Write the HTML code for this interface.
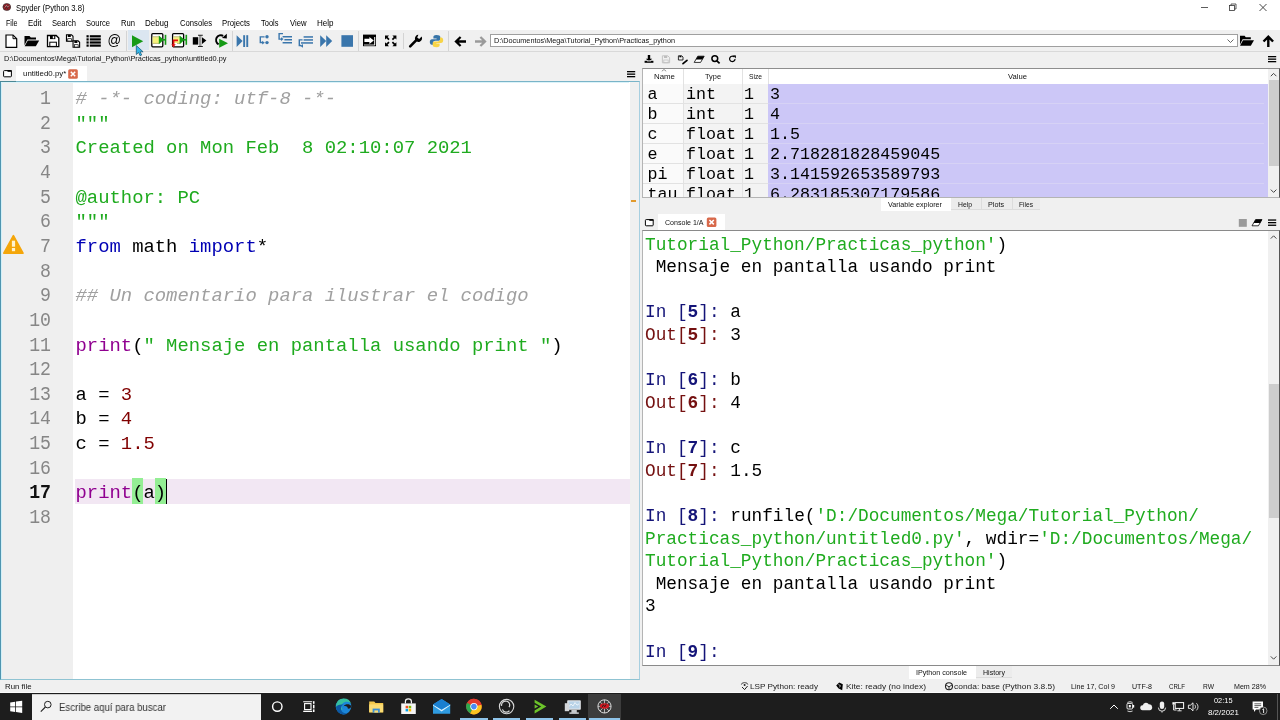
<!DOCTYPE html>
<html><head><meta charset="utf-8">
<style>
*{box-sizing:border-box;margin:0;padding:0}
html,body{width:1280px;height:720px;overflow:hidden;background:#f0f0f0;font-family:"Liberation Sans",sans-serif;font-size:8px;color:#111}
.abs,.b{position:absolute}
.lb{position:absolute;white-space:pre;transform-origin:0 50%;font-family:"Liberation Sans",sans-serif}
.mono{font-family:"Liberation Mono",monospace;white-space:pre}
.ln{position:absolute;left:0;width:51px;transform:scaleY(1.08);transform-origin:0 70%;text-align:right;font-family:"Liberation Mono",monospace;font-size:18.2px;color:#868686;line-height:24.65px;height:24.65px}
.ln.cur{color:#111;font-weight:bold}
.cl{position:absolute;left:75.5px;font-family:"Liberation Mono",monospace;font-size:18.89px;line-height:24.65px;height:24.65px;white-space:pre;color:#000}
.cm{color:#a0a0a0;font-style:italic}
.st{color:#1fab1f}
.kw{color:#0000b4}
.bi{color:#900090}
.nu{color:#800000}
.br{background:#94ee94;padding:4px 0 0}
.co{position:absolute;left:645px;font-family:"Liberation Mono",monospace;font-size:17.75px;line-height:22.61px;height:22.61px;white-space:pre;color:#000}
.ci{color:#141478}
.co b{font-weight:bold}
.cou{color:#741010}
.cs{color:#1fab1f}
.vr{position:absolute;font-family:"Liberation Mono",monospace;font-size:16.7px;line-height:20px;height:20px;white-space:pre;color:#000}
#root{position:absolute;left:0;top:0;width:1280px;height:720px;will-change:transform;}
</style></head><body><div id="root">

<!-- title / menu -->
<div class="b" style="left:0;top:0;width:1280px;height:30px;background:#fff"></div>
<!-- toolbar bottom line + separators -->
<div class="b" style="left:0;top:51px;width:1280px;height:1px;background:#d9d9d9"></div>
<div class="b" style="left:126px;top:31px;width:1px;height:20px;background:#d4d4d4"></div>
<div class="b" style="left:232px;top:31px;width:1px;height:20px;background:#d4d4d4"></div>
<div class="b" style="left:358px;top:31px;width:1px;height:20px;background:#d4d4d4"></div>
<div class="b" style="left:403px;top:33px;width:1px;height:16px;background:#d4d4d4"></div>
<div class="b" style="left:448px;top:31px;width:1px;height:20px;background:#d4d4d4"></div>
<!-- run hover -->
<div class="b" style="left:128px;top:30px;width:21px;height:20px;background:#dbe6f1"></div>
<!-- combo -->
<div class="b" style="left:490px;top:34px;width:748px;height:13px;background:#fff;border:1px solid #9f9f9f"></div>
<!-- editor tab -->
<div class="b" style="left:16px;top:66px;width:71px;height:16px;background:#fff"></div>
<!-- editor frame -->
<div class="b" style="left:0;top:81px;width:640px;height:598.5px;background:#fff;border:1px solid #8fc3d2;border-left-color:#4f95b0;border-top-color:#79b4c8;border-right-color:#a7cfe0"></div>
<div class="b" style="left:0;top:81px;width:16px;height:1px;background:#4a8794"></div>
<div class="b" style="left:1px;top:82px;width:72px;height:596.5px;background:#efefef"></div>
<div class="b" style="left:1px;top:82px;width:1px;height:596.5px;background:#d2f0f8"></div>
<div class="b" style="left:1px;top:82px;width:628px;height:1px;background:#dcf3f9"></div>
<div class="b" style="left:630px;top:82px;width:9px;height:596.5px;background:#f0f0f0"></div>
<div class="b" style="left:631px;top:200px;width:5px;height:2px;background:#e29a2c"></div>

<!-- variable explorer table -->
<div class="b" style="left:642px;top:68px;width:638px;height:130px;background:#fff;border:1px solid #8e8e8e;border-left-color:#b4b4b4;border-bottom-color:#b4b4b4;border-right-color:#555"></div>
<!-- left cells bg -->
<div class="b" style="left:643px;top:84px;width:40px;height:113px;background:#fafafa"></div><div class="b" style="left:683px;top:84px;width:85px;height:113px;background:#f3f3f3"></div>
<div class="b" style="left:768px;top:84px;width:500px;height:113px;background:#ccc7f7"></div>
<!-- grid lines -->
<div class="b" style="left:683px;top:69px;width:1px;height:128px;background:#e2e2e2"></div>
<div class="b" style="left:742px;top:69px;width:1px;height:128px;background:#e2e2e2"></div>
<div class="b" style="left:768px;top:69px;width:1px;height:15px;background:#e2e2e2"></div>
<div class="b" style="left:643px;top:103px;width:125px;height:1px;background:#e2e2e2"></div>
<div class="b" style="left:643px;top:123px;width:125px;height:1px;background:#e2e2e2"></div>
<div class="b" style="left:643px;top:143px;width:125px;height:1px;background:#e2e2e2"></div>
<div class="b" style="left:643px;top:163px;width:125px;height:1px;background:#e2e2e2"></div>
<div class="b" style="left:643px;top:183px;width:125px;height:1px;background:#e2e2e2"></div>
<div class="b" style="left:768px;top:103px;width:496px;height:1px;background:#d6d2f5"></div>
<div class="b" style="left:768px;top:123px;width:496px;height:1px;background:#d6d2f5"></div>
<div class="b" style="left:768px;top:143px;width:496px;height:1px;background:#d6d2f5"></div>
<div class="b" style="left:768px;top:163px;width:496px;height:1px;background:#d6d2f5"></div>
<div class="b" style="left:768px;top:183px;width:496px;height:1px;background:#d6d2f5"></div>
<!-- var scrollbar -->
<div class="b" style="left:1268px;top:69px;width:11px;height:128px;background:#f0f0f0"></div>
<div class="b" style="left:1269px;top:80px;width:10px;height:86px;background:#cdcdcd"></div>
<!-- right tabs (var explorer) -->
<div class="b" style="left:951px;top:198px;width:89px;height:12px;background:#ececec;border-bottom:1px solid #dcdcdc"></div>
<div class="b" style="left:981px;top:198px;width:1px;height:11px;background:#dcdcdc"></div>
<div class="b" style="left:1012px;top:198px;width:1px;height:11px;background:#dcdcdc"></div>
<div class="b" style="left:881px;top:198px;width:70px;height:13px;background:#fff"></div>
<!-- console tab -->
<div class="b" style="left:658px;top:214px;width:67px;height:17px;background:#fff"></div>
<!-- console frame -->
<div class="b" style="left:642px;top:230px;width:638px;height:436px;background:#fff;border:1px solid #8a8a8a;border-left-color:#b4b4b4;border-right-color:#555"></div>
<div class="b" style="left:1268px;top:231px;width:11px;height:434px;background:#f0f0f0"></div>
<div class="b" style="left:1269px;top:384px;width:10px;height:134px;background:#cdcdcd"></div>
<!-- console bottom tabs -->
<div class="b" style="left:976px;top:666px;width:36px;height:12px;background:#ececec;border-bottom:1px solid #dcdcdc"></div>
<div class="b" style="left:909px;top:666px;width:67px;height:13px;background:#fff"></div>
<!-- taskbar -->
<div class="b" style="left:0;top:692px;width:1280px;height:1px;background:#fafafa"></div>
<div class="b" style="left:0;top:693px;width:1280px;height:27px;background:#1d1d1d"></div>
<div class="b" style="left:32px;top:694px;width:229px;height:26px;background:#f2f2f2;border-top:1px solid #d0d0d0"></div>
<div class="b" style="left:588px;top:694px;width:33px;height:26px;background:#3c3c3c"></div>
<div class="b" style="left:460px;top:718px;width:28px;height:2px;background:#8fc4ea"></div>
<div class="b" style="left:493px;top:718px;width:27px;height:2px;background:#8fc4ea"></div>
<div class="b" style="left:526px;top:718px;width:27px;height:2px;background:#8fc4ea"></div>
<div class="b" style="left:559px;top:718px;width:27px;height:2px;background:#8fc4ea"></div>
<div class="b" style="left:589px;top:718px;width:31px;height:2px;background:#8fc4ea"></div>
<div class="b" style="left:1277px;top:694px;width:1px;height:26px;background:#555"></div>

<div class="b" style="left:75px;top:479px;width:555px;height:25px;background:#f2e7f3"></div>
<div class="ln" style="top:87.00px">1</div>
<div class="cl" style="top:87.00px"><span class="cm"># -*- coding: utf-8 -*-</span></div>
<div class="ln" style="top:111.65px">2</div>
<div class="cl" style="top:111.65px"><span class="st">"""</span></div>
<div class="ln" style="top:136.30px">3</div>
<div class="cl" style="top:136.30px"><span class="st">Created on Mon Feb  8 02:10:07 2021</span></div>
<div class="ln" style="top:160.95px">4</div>
<div class="ln" style="top:185.60px">5</div>
<div class="cl" style="top:185.60px"><span class="st">@author: PC</span></div>
<div class="ln" style="top:210.25px">6</div>
<div class="cl" style="top:210.25px"><span class="st">"""</span></div>
<div class="ln" style="top:234.90px">7</div>
<div class="cl" style="top:234.90px"><span class="kw">from</span> math <span class="kw">import</span>*</div>
<div class="ln" style="top:259.55px">8</div>
<div class="ln" style="top:284.20px">9</div>
<div class="cl" style="top:284.20px"><span class="cm">## Un comentario para ilustrar el codigo</span></div>
<div class="ln" style="top:308.85px">10</div>
<div class="ln" style="top:333.50px">11</div>
<div class="cl" style="top:333.50px"><span class="bi">print</span>(<span class="st">" Mensaje en pantalla usando print "</span>)</div>
<div class="ln" style="top:358.15px">12</div>
<div class="ln" style="top:382.80px">13</div>
<div class="cl" style="top:382.80px">a = <span class="nu">3</span></div>
<div class="ln" style="top:407.45px">14</div>
<div class="cl" style="top:407.45px">b = <span class="nu">4</span></div>
<div class="ln" style="top:432.10px">15</div>
<div class="cl" style="top:432.10px">c = <span class="nu">1.5</span></div>
<div class="ln" style="top:456.75px">16</div>
<div class="ln cur" style="top:481.40px">17</div>
<div class="cl" style="top:481.40px"><span class="bi">print</span><span class="br">(</span>a<span class="br">)</span></div>
<div class="ln" style="top:506.05px">18</div>
<div class="b" style="left:166px;top:479px;width:1.2px;height:25px;background:#000"></div>
<div class="b" style="left:643px;top:84px;width:625px;height:113px;overflow:hidden">
<span class="vr" style="left:4.5px;top:1.2px">a</span><span class="vr" style="left:43px;top:1.2px">int</span><span class="vr" style="left:101px;top:1.2px">1</span><span class="vr" style="left:127px;top:1.2px">3</span>
<span class="vr" style="left:4.5px;top:21.2px">b</span><span class="vr" style="left:43px;top:21.2px">int</span><span class="vr" style="left:101px;top:21.2px">1</span><span class="vr" style="left:127px;top:21.2px">4</span>
<span class="vr" style="left:4.5px;top:41.2px">c</span><span class="vr" style="left:43px;top:41.2px">float</span><span class="vr" style="left:101px;top:41.2px">1</span><span class="vr" style="left:127px;top:41.2px">1.5</span>
<span class="vr" style="left:4.5px;top:61.2px">e</span><span class="vr" style="left:43px;top:61.2px">float</span><span class="vr" style="left:101px;top:61.2px">1</span><span class="vr" style="left:127px;top:61.2px">2.718281828459045</span>
<span class="vr" style="left:4.5px;top:81.2px">pi</span><span class="vr" style="left:43px;top:81.2px">float</span><span class="vr" style="left:101px;top:81.2px">1</span><span class="vr" style="left:127px;top:81.2px">3.141592653589793</span>
<span class="vr" style="left:4.5px;top:101.2px">tau</span><span class="vr" style="left:43px;top:101.2px">float</span><span class="vr" style="left:101px;top:101.2px">1</span><span class="vr" style="left:127px;top:101.2px">6.283185307179586</span>
</div>
<div class="co" style="top:233.65px"><span class="cs">Tutorial_Python/Practicas_python'</span>)</div>
<div class="co" style="top:256.25px"> Mensaje en pantalla usando print</div>
<div class="co" style="top:301.48px"><span class="ci">In [<b>5</b>]:</span> a</div>
<div class="co" style="top:324.09px"><span class="cou">Out[<b>5</b>]:</span> 3</div>
<div class="co" style="top:369.31px"><span class="ci">In [<b>6</b>]:</span> b</div>
<div class="co" style="top:391.91px"><span class="cou">Out[<b>6</b>]:</span> 4</div>
<div class="co" style="top:437.13px"><span class="ci">In [<b>7</b>]:</span> c</div>
<div class="co" style="top:459.75px"><span class="cou">Out[<b>7</b>]:</span> 1.5</div>
<div class="co" style="top:504.97px"><span class="ci">In [<b>8</b>]:</span> runfile(<span class="cs">'D:/Documentos/Mega/Tutorial_Python/</span></div>
<div class="co" style="top:527.58px"><span class="cs">Practicas_python/untitled0.py'</span>, wdir=<span class="cs">'D:/Documentos/Mega/</span></div>
<div class="co" style="top:550.18px"><span class="cs">Tutorial_Python/Practicas_python'</span>)</div>
<div class="co" style="top:572.79px"> Mensaje en pantalla usando print</div>
<div class="co" style="top:595.40px">3</div>
<div class="co" style="top:640.62px"><span class="ci">In [<b>9</b>]:</span></div>
<span class="lb" style="left:15.50px;top:2.60px;font-size:8.40px;line-height:10px;transform:scaleX(0.9197);color:#000">Spyder (Python 3.8)</span>
<span class="lb" style="left:5.50px;top:19.00px;font-size:8.20px;line-height:10px;transform:scaleX(0.8710);color:#000">File</span>
<span class="lb" style="left:28.00px;top:19.00px;font-size:8.20px;line-height:10px;transform:scaleX(0.9568);color:#000">Edit</span>
<span class="lb" style="left:51.50px;top:19.00px;font-size:8.20px;line-height:10px;transform:scaleX(0.9247);color:#000">Search</span>
<span class="lb" style="left:86.00px;top:19.00px;font-size:8.20px;line-height:10px;transform:scaleX(0.9247);color:#000">Source</span>
<span class="lb" style="left:120.50px;top:19.00px;font-size:8.20px;line-height:10px;transform:scaleX(0.9314);color:#000">Run</span>
<span class="lb" style="left:145.00px;top:19.00px;font-size:8.20px;line-height:10px;transform:scaleX(0.9735);color:#000">Debug</span>
<span class="lb" style="left:179.50px;top:19.00px;font-size:8.20px;line-height:10px;transform:scaleX(0.9373);color:#000">Consoles</span>
<span class="lb" style="left:222.00px;top:19.00px;font-size:8.20px;line-height:10px;transform:scaleX(0.9466);color:#000">Projects</span>
<span class="lb" style="left:261.00px;top:19.00px;font-size:8.20px;line-height:10px;transform:scaleX(0.9150);color:#000">Tools</span>
<span class="lb" style="left:289.50px;top:19.00px;font-size:8.20px;line-height:10px;transform:scaleX(0.9370);color:#000">View</span>
<span class="lb" style="left:316.50px;top:19.00px;font-size:8.20px;line-height:10px;transform:scaleX(0.9796);color:#000">Help</span>
<span class="lb" style="left:3.50px;top:54.10px;font-size:7.40px;line-height:9px;transform:scaleX(0.9950);color:#111">D:\Documentos\Mega\Tutorial_Python\Practicas_python\untitled0.py</span>
<span class="lb" style="left:22.70px;top:68.80px;font-size:7.60px;line-height:10px;transform:scaleX(1.0360);color:#111">untitled0.py*</span>
<span class="lb" style="left:494.00px;top:36.40px;font-size:7.40px;line-height:9px;transform:scaleX(0.9850);color:#111">D:\Documentos\Mega\Tutorial_Python\Practicas_python</span>
<span class="lb" style="left:654.00px;top:71.60px;font-size:7.60px;line-height:10px;transform:scaleX(1.0362);color:#111">Name</span>
<span class="lb" style="left:705.00px;top:71.60px;font-size:7.60px;line-height:10px;transform:scaleX(0.9715);color:#111">Type</span>
<span class="lb" style="left:749.00px;top:71.60px;font-size:7.60px;line-height:10px;transform:scaleX(0.8795);color:#111">Size</span>
<span class="lb" style="left:1008.00px;top:71.60px;font-size:7.60px;line-height:10px;transform:scaleX(1.0075);color:#111">Value</span>
<span class="lb" style="left:888.00px;top:199.60px;font-size:7.60px;line-height:10px;transform:scaleX(0.9500);color:#111">Variable explorer</span>
<span class="lb" style="left:958.00px;top:199.60px;font-size:7.60px;line-height:10px;transform:scaleX(0.8960);color:#111">Help</span>
<span class="lb" style="left:988.00px;top:199.60px;font-size:7.60px;line-height:10px;transform:scaleX(0.9473);color:#111">Plots</span>
<span class="lb" style="left:1019.00px;top:199.60px;font-size:7.60px;line-height:10px;transform:scaleX(0.8724);color:#111">Files</span>
<span class="lb" style="left:665.00px;top:217.80px;font-size:7.60px;line-height:10px;transform:scaleX(0.9305);color:#111">Console 1/A</span>
<span class="lb" style="left:916.00px;top:667.70px;font-size:7.60px;line-height:10px;transform:scaleX(0.9436);color:#111">IPython console</span>
<span class="lb" style="left:983.00px;top:667.70px;font-size:7.60px;line-height:10px;transform:scaleX(0.9306);color:#111">History</span>
<span class="lb" style="left:4.50px;top:681.60px;font-size:7.60px;line-height:10px;transform:scaleX(1.0291);color:#111">Run file</span>
<span class="lb" style="left:750.00px;top:681.80px;font-size:8.00px;line-height:10px;transform:scaleX(1.0216);color:#222">LSP Python: ready</span>
<span class="lb" style="left:846.00px;top:681.80px;font-size:8.00px;line-height:10px;transform:scaleX(1.0520);color:#222">Kite: ready (no index)</span>
<span class="lb" style="left:954.00px;top:681.80px;font-size:8.00px;line-height:10px;transform:scaleX(1.0514);color:#222">conda: base (Python 3.8.5)</span>
<span class="lb" style="left:1071.00px;top:681.60px;font-size:7.60px;line-height:10px;transform:scaleX(0.9387);color:#111">Line 17, Col 9</span>
<span class="lb" style="left:1132.00px;top:681.60px;font-size:7.60px;line-height:10px;transform:scaleX(0.9296);color:#111">UTF-8</span>
<span class="lb" style="left:1169.00px;top:681.60px;font-size:7.60px;line-height:10px;transform:scaleX(0.8063);color:#111">CRLF</span>
<span class="lb" style="left:1203.00px;top:681.60px;font-size:7.60px;line-height:10px;transform:scaleX(0.8789);color:#111">RW</span>
<span class="lb" style="left:1234.00px;top:681.60px;font-size:7.60px;line-height:10px;transform:scaleX(0.9360);color:#111">Mem 28%</span>
<span class="lb" style="left:59.00px;top:700.50px;font-size:10.20px;line-height:13px;transform:scaleX(0.9447);color:#333">Escribe aquí para buscar</span>
<span class="lb" style="left:1214.00px;top:695.80px;font-size:7.60px;line-height:10px;transform:scaleX(0.9729);color:#fff">02:15</span>
<span class="lb" style="left:1207.60px;top:707.50px;font-size:7.60px;line-height:10px;transform:scaleX(1.0452);color:#fff">8/2/2021</span>
<svg class="b" style="left:0;top:0" width="1280" height="720" viewBox="0 0 1280 720">
<!-- ===== title bar ===== -->
<g id="ti">
<ellipse cx="6.800" cy="7" rx="3.900" ry="3.500" fill="#9c1a24"/><ellipse cx="6.800" cy="7" rx="3.900" ry="3.500" fill="none" stroke="#3a3a3a" stroke-width="0.700"/>
<path d="M3.200 6.600l7.200 0.600M4.600 9.400l4.600-5M5.600 4.200l2.600 6" stroke="#2c2c2c" stroke-width="0.600"/><path d="M4.800 7.400l1.600-2 1.200 1.800 1.400-1.600" stroke="#e8b0b0" stroke-width="0.600" fill="none"/>
<path d="M1201 7.5h7" stroke="#333" stroke-width="0.8"/>
<rect x="1229.5" y="5.5" width="5" height="5" fill="none" stroke="#333" stroke-width="0.8"/><path d="M1231 5.5v-1.5h5v5h-1.5" fill="none" stroke="#333" stroke-width="0.8"/>
<path d="M1259.5 4l7 7m0-7l-7 7" stroke="#333" stroke-width="0.9"/>
</g>
<!-- ===== main toolbar ===== -->
<g id="tb">
<!-- new file -->
<path d="M6 35h7l3.7 3.7V47.3H6z" fill="#fff" stroke="#000" stroke-width="1.2"/><path d="M13 35v3.7h3.7" fill="none" stroke="#000" stroke-width="1"/>
<!-- open folder -->
<path d="M24.5 36h5l1.3 1.6h5.2v2h-8.6l-2.9 5.6z" fill="#000"/><path d="M27.8 40.5h11.4l-3.4 5.7H24.6z" fill="#000"/>
<!-- save -->
<path d="M47.5 35.5h8.7l2.6 2.6v8.6H47.5z" fill="#fff" stroke="#000" stroke-width="1.3"/><rect x="50" y="35.5" width="5.3" height="3.6" fill="#000"/><rect x="52.8" y="36.2" width="1.4" height="2.2" fill="#fff"/><rect x="49.8" y="42.2" width="6.6" height="4.2" fill="#fff" stroke="#000" stroke-width="1"/>
<!-- save all -->
<g transform="translate(66 34.3) scale(0.58)"><path d="M0.8 0.8h8.7l2.6 2.6v8.6H0.8z" fill="#fff" stroke="#000" stroke-width="1.9"/><rect x="3" y="0.8" width="5.3" height="3.8" fill="#000"/><rect x="3" y="7.6" width="6.6" height="4" fill="#fff" stroke="#000" stroke-width="1.2"/></g>
<g transform="translate(72.6 40.3) scale(0.58)"><path d="M0.8 0.8h8.7l2.6 2.6v8.6H0.8z" fill="#fff" stroke="#000" stroke-width="1.9"/><rect x="3" y="0.8" width="5.3" height="3.8" fill="#000"/><rect x="3" y="7.6" width="6.6" height="4" fill="#fff" stroke="#000" stroke-width="1.2"/></g>
<!-- list -->
<g fill="#000"><rect x="86.5" y="35.2" width="2.2" height="2.2"/><rect x="89.8" y="35.2" width="11" height="2.2"/><rect x="86.5" y="38.3" width="2.2" height="2.2"/><rect x="89.8" y="38.3" width="11" height="2.2"/><rect x="86.5" y="41.4" width="2.2" height="2.2"/><rect x="89.8" y="41.4" width="11" height="2.2"/><rect x="86.5" y="44.5" width="2.2" height="2.2"/><rect x="89.8" y="44.5" width="11" height="2.2"/></g>
<!-- @ -->
<text x="107.4" y="45.2" font-family="Liberation Sans" font-size="14.2" fill="#000" textLength="13.6" lengthAdjust="spacingAndGlyphs">@</text>
<!-- run -->
<path d="M132 35.3l11.2 5.9L132 47.2z" fill="#169a16"/>
<!-- cursor -->
<path d="M136.3 45.5l0 9 2.2-2 1.6 3.3 1.6-0.8-1.6-3.2 3 0z" fill="#35b6e8" stroke="#12506e" stroke-width="0.7"/>
<!-- run cell -->
<rect x="151.800" y="33.600" width="11" height="13.200" rx="1" fill="#fff" stroke="#000" stroke-width="1.300"/><rect x="152.600" y="37.200" width="8" height="5.800" fill="#f7f27c"/><path d="M152.600 36.800h7M152.600 43.400h7" stroke="#b9b25a" stroke-width="0.900"/>
<path d="M158.800 35.400l5 4.400-5 4.400z" fill="#169a16"/><rect x="164.700" y="34.800" width="1.600" height="10" fill="#169a16"/><rect x="163" y="39" width="2.400" height="1.600" fill="#169a16"/>
<!-- run cell advance -->
<rect x="172.600" y="33.600" width="11" height="13.200" rx="1" fill="#fff" stroke="#000" stroke-width="1.300"/><rect x="173.400" y="37.200" width="8" height="5.800" fill="#f7f27c"/><path d="M173.400 36.800h7M177 43.400h3.400" stroke="#b9b25a" stroke-width="0.900"/>
<path d="M179.600 35.400l5 4.400-5 4.400z" fill="#169a16"/><rect x="185.500" y="34.800" width="1.600" height="10" fill="#169a16"/><rect x="183.800" y="39" width="2.400" height="1.600" fill="#169a16"/>
<path d="M178 40.300h-4.500v4.800" fill="none" stroke="#e01010" stroke-width="1.800"/><path d="M171.400 44.200l2.100 3.400 2.100-3.400z" fill="#e01010"/>
<!-- run selection -->
<rect x="192.800" y="37.200" width="5.400" height="7.400" fill="#000"/><rect x="199" y="35.200" width="2.500" height="11.400" fill="#9a9a9a"/><path d="M198 35.300h4.800M198 46.500h4.800" stroke="#222" stroke-width="1.100"/><path d="M202 37.200l4.400 3.400-4.400 3.400z" fill="#000"/>
<!-- rerun -->
<path d="M223.200 35.800a4.500 4.500 0 1 0-4.600 8.600" fill="none" stroke="#000" stroke-width="1.900"/><path d="M226.800 33.800v4.700l-4.900-0.500z" fill="#000"/>
<path d="M219.200 38.700l8.800 4.600-8.800 4.500z" fill="#169a16"/>
<!-- debug -->
<g fill="#3a76ac">
<path d="M236.6 35.2l6 5.9-6 5.9z"/><rect x="243.2" y="35.2" width="1.9" height="11.8"/><rect x="246.3" y="35.2" width="1.9" height="11.8"/>
<!-- step -->
<circle cx="267" cy="36.8" r="1.7"/><circle cx="267" cy="42.6" r="1.7"/>
<path d="M264.6 36.2h-5v7h3.4v-1.4h-2v-4.2h3.6z"/><path d="M262.2 40.8l2.6 1.9-2.6 1.9z"/>
<!-- step into -->
<path d="M283 33h-4.6v6.8h3v-1.3h-1.6v-4.2h3.2z"/><path d="M281 37.2l2.6 1.9-2.6 1.9z"/>
<rect x="282.6" y="36" width="9.4" height="1.5"/><rect x="284.4" y="39" width="7.6" height="1.5"/><rect x="282.6" y="42" width="9.4" height="1.5"/>
<!-- step return -->
<rect x="303.6" y="36.2" width="9.4" height="1.5"/><rect x="303.6" y="39.2" width="9.4" height="1.5"/><rect x="301" y="42.2" width="12" height="1.5"/>
<path d="M302.6 39.2h-4v7h2.6v-1.4h-1.2v-4.2h2.6z"/><path d="M303 44l-2.6 1.9 2.6 1.9z"/>
<!-- continue -->
<path d="M320.2 35.2l6 5.9-6 5.9z"/><path d="M326.2 35.2l6 5.9-6 5.9z"/>
<!-- stop -->
<rect x="341.4" y="35.2" width="11.6" height="11.6"/>
</g>
<!-- maximize pane -->
<rect x="363" y="34.6" width="13" height="11.6" fill="#000"/><path d="M364.4 38.8h5v-1.9l4.4 3.5-4.4 3.5v-1.9h-5z" fill="#fff"/><rect x="374.2" y="37" width="1" height="8" fill="#fff"/><rect x="364" y="44.6" width="11" height="0.8" fill="#fff"/>
<!-- fullscreen -->
<g fill="#000"><path d="M385 35.6h4l-1.4 1.4 2 2-1.2 1.2-2-2-1.4 1.4z"/><path d="M396.4 35.6v4l-1.4-1.4-2 2-1.2-1.2 2-2-1.4-1.4z"/><path d="M385 46.2v-4l1.4 1.4 2-2 1.2 1.2-2 2 1.4 1.4z"/><path d="M396.4 46.2h-4l1.4-1.4-2-2 1.2-1.2 2 2 1.4-1.4z"/></g>
<!-- wrench -->
<path d="M410.2 46.4l6.6-6.8" stroke="#000" stroke-width="2.6" stroke-linecap="round"/><path d="M421.6 36.6a3.6 3.6 0 1 1-3.2-1.8l-1.2 2.6 2 1.6z" fill="#000"/>
<!-- python -->
<path d="M436.4 35c-2.6 0-3 1.1-3 2v1.6h3.2v.6h-4.6c-1.4 0-2.2 1.2-2.2 2.8s.8 2.8 2 2.800h1.200v-1.800c0-1.300 1.100-2.200 2.300-2.200h3.200c1 0 1.800-.8 1.800-1.800v-2c0-1.200-1.200-2-3.900-2z" fill="#3774a8"/>
<path d="M436.600 47.200c2.600 0 3-1.100 3-2v-1.600h-3.200v-.6h4.600c1.400 0 2.200-1.200 2.200-2.800s-.8-2.800-2-2.800h-1.200v1.800c0 1.300-1.100 2.200-2.300 2.200h-3.200c-1 0-1.800.8-1.800 1.800v2c0 1.200 1.200 2 3.900 2z" fill="#f7d447"/>
<!-- back / forward -->
<path d="M466 41.500h-9.500M460.600 37l-4.600 4.500 4.600 4.500" fill="none" stroke="#000" stroke-width="2.300" stroke-linejoin="miter"/>
<path d="M475 41.500h9.500M480.400 37l4.600 4.500-4.600 4.500" fill="none" stroke="#9a9a9a" stroke-width="2.300"/>
<!-- combo chevron -->
<path d="M1227.500 39.500l3 3 3-3" fill="none" stroke="#555" stroke-width="0.9"/>
<!-- folder right -->
<path d="M1240 35.800h4.600l1.200 1.500h5v2h-8.200l-2.600 5.200z" fill="#000"/><path d="M1243 40.300h11l-3.200 5.500H1240z" fill="#000"/>
<!-- up arrow -->
<path d="M1268.300 47v-9.500M1263.500 41.500l4.800-4.700 4.800 4.700" fill="none" stroke="#000" stroke-width="2.400"/>
</g>

<!-- ===== var explorer toolbar ===== -->
<g id="ve">
<path d="M647.800 55h2.400v3.800h2l-3.200 3-3.200-3h2z" fill="#000"/><rect x="644.600" y="60.800" width="8.800" height="2" fill="#000"/><rect x="647" y="60.400" width="4" height="1" fill="#f0f0f0"/>
<path d="M662.400 55.800h5.400l1.800 1.800v5.200h-7.200z" fill="none" stroke="#bdbdbd" stroke-width="0.900"/><rect x="664" y="55.800" width="3.200" height="2.200" fill="#bdbdbd"/><rect x="663.800" y="60" width="4.400" height="2.800" fill="none" stroke="#bdbdbd" stroke-width="0.700"/>
<path d="M678.400 55.800h3.400l1.200 1.200v3h-4.600z" fill="none" stroke="#000" stroke-width="0.800"/><rect x="679.400" y="55.800" width="2" height="1.500" fill="#000"/>
<path d="M687 60.300l-4 3.400" stroke="#000" stroke-width="1.700" stroke-linecap="round"/>
<path d="M697.800 56.200h6.400l-3.600 6.200h-6.400z" fill="#fff" stroke="#000" stroke-width="0.800"/><path d="M697.800 56.200h6.400l-1.900 3.300h-6.400z" fill="#000"/>
<circle cx="714.800" cy="58.600" r="2.900" fill="none" stroke="#000" stroke-width="1.500"/><path d="M716.900 60.800l2.700 2.600" stroke="#000" stroke-width="1.700"/>
<path d="M735 58.900a2.700 2.700 0 1 1-1-2.100" fill="none" stroke="#000" stroke-width="1.200"/><path d="M733 55.200l3 0.200-0.300 3z" fill="#000"/>
<g fill="#000"><rect x="1268" y="56" width="8.200" height="1.300"/><rect x="1268" y="58.500" width="8.200" height="1.300"/><rect x="1268" y="61" width="8.200" height="1.300"/></g>
</g>
<!-- editor tab bar icons -->
<g id="et">
<rect x="3.600" y="70.600" width="7.800" height="6.200" rx="0.800" fill="#fff" stroke="#000" stroke-width="1"/><rect x="7.500" y="70.200" width="4.300" height="1.600" fill="#000"/>
<rect x="68.200" y="69.200" width="9.600" height="9.600" rx="1.500" fill="#d8694b"/><path d="M70.800 71.800l4.400 4.400m0-4.400l-4.400 4.400" stroke="#fff" stroke-width="1.500"/>
<g fill="#000"><rect x="627" y="71" width="8.200" height="1.300"/><rect x="627" y="73.500" width="8.200" height="1.300"/><rect x="627" y="76" width="8.200" height="1.300"/></g>
</g>
<!-- console tab bar icons -->
<g id="ct">
<rect x="645.400" y="219.600" width="7.800" height="6.200" rx="0.800" fill="#fff" stroke="#000" stroke-width="1"/><rect x="649.300" y="219.200" width="4.300" height="1.600" fill="#000"/>
<rect x="706.800" y="217.400" width="9.600" height="9.600" rx="1.500" fill="#d8694b"/><path d="M709.400 220l4.400 4.400m0-4.400l-4.400 4.400" stroke="#fff" stroke-width="1.500"/>
<rect x="1238.800" y="219" width="8" height="7.800" fill="#9a9a9a"/>
<path d="M1255.600 219.600h6.400l-3.600 6.200h-6.400z" fill="#fff" stroke="#000" stroke-width="0.800"/><path d="M1255.600 219.600h6.400l-1.900 3.300h-6.400z" fill="#000"/>
<g fill="#000"><rect x="1268" y="219.400" width="8.200" height="1.300"/><rect x="1268" y="222" width="8.200" height="1.300"/><rect x="1268" y="224.600" width="8.200" height="1.300"/></g>
</g>
<!-- scrollbar arrows -->
<g fill="none" stroke="#444" stroke-width="1">
<path d="M1270.800 76.200l2.800-2.800 2.800 2.800"/><path d="M1270.800 189.600l2.800 2.800 2.800-2.800"/>
<path d="M1270.800 238.600l2.800-2.800 2.800 2.800"/><path d="M1270.800 656.400l2.800 2.800 2.800-2.800"/>
</g>
<!-- header sort indicator -->
<path d="M661.800 71.200l2.200-1.700 2.200 1.700" fill="none" stroke="#666" stroke-width="0.700"/>
<!-- warning triangle -->
<path d="M13.400 235.600l9.600 17.600H3.800z" fill="#f4a60a" stroke="#f4a60a" stroke-width="1.600" stroke-linejoin="round"/><rect x="11.900" y="240.700" width="3.200" height="6" fill="#fff3cf"/><rect x="11.900" y="248" width="3.200" height="3.200" fill="#fff3cf"/>
<!-- status icons -->
<g id="sb">
<circle cx="744.600" cy="685" r="1" fill="#222"/><path d="M741.400 684.600a3.200 2 0 0 1 6.400 0" fill="none" stroke="#222" stroke-width="0.800"/><path d="M742 687l2.600 2.600 3-3.600" fill="none" stroke="#222" stroke-width="1"/>
<path d="M839.200 682.600l3.600 1.600-0.600 6-3.600-1.800-2.400-3z" fill="#000"/><path d="M838.400 684.600l2 1-0.800 1.800" stroke="#f0f0f0" stroke-width="0.700" fill="none"/>
<circle cx="949" cy="686.300" r="3.500" fill="none" stroke="#222" stroke-width="1.100"/><path d="M946 685l3 1.800 3-1.800M949 686.800v3" stroke="#222" stroke-width="0.900" fill="none"/>
</g>

<!-- ===== taskbar ===== -->
<g id="tk">
<!-- windows logo -->
<g fill="#fff"><path d="M10.200 702.400l5-0.700v4.700h-5z"/><path d="M16 701.600l6.200-0.900v5.700H16z"/><path d="M10.200 707.200h5v4.700l-5-0.700z"/><path d="M16 707.200h6.200v5.700L16 712z"/></g>
<!-- search icon -->
<circle cx="47.800" cy="704.600" r="3.300" fill="none" stroke="#222" stroke-width="1"/><path d="M45.400 707l-4.600 4.600" stroke="#222" stroke-width="1.100"/>
<!-- cortana -->
<circle cx="277.300" cy="706.600" r="4.700" fill="none" stroke="#fff" stroke-width="1.400"/>
<!-- task view -->
<g fill="none" stroke="#fff" stroke-width="1.100"><rect x="304.600" y="703.600" width="6.400" height="6"/><path d="M303.200 701.800h9M303.200 711.400h9"/></g><g fill="#fff"><rect x="313" y="701.200" width="1.500" height="2.600"/><rect x="313" y="704.800" width="1.500" height="3.600"/><rect x="313" y="709.400" width="1.500" height="2.600"/></g>
<!-- edge -->
<circle cx="343.500" cy="706.600" r="7.800" fill="#1b86d8"/><path d="M336.200 704.500a7.800 7.800 0 0 1 15-0.500c-1.500-2.400-6-3.300-8.600-0.400c-1.800 2-1.400 4.600 0 6.200c-4 0.200-7.200-2.300-6.400-5.300z" fill="#36c0a0"/><path d="M336 707a7.800 7.800 0 0 0 11.600 6.400c-3.600 0.600-6.800-1.600-6.600-5.300c0.100-1.800 1.200-3 2.600-3.500c-3.200-0.600-6.800 0.200-7.600 2.400z" fill="#0c59a4"/><path d="M343.600 706.200c1.800-0.800 4.400 0 4.200 2.400c1.800 0.300 3.400-0.800 3.500-2.600c-1.600-2.200-5.800-2.600-7.700 0.200z" fill="#1d1d1d"/>
<!-- explorer -->
<path d="M369.200 701.400h5l1.300 1.500h7.700v9.500h-14z" fill="#f4c94c"/><path d="M369.200 704.400h14v7.800h-14z" fill="#fbdc74"/><path d="M372.600 708.600h7.200v4h-7.200z" fill="#3b8fd6"/><rect x="374.400" y="710.400" width="3.600" height="2.200" fill="#fbdc74"/>
<!-- store -->
<path d="M401.200 703.400h14.600v10.600h-14.600z" fill="#f4f4f4"/><path d="M405.400 703.400v-2a3 2.600 0 0 1 6 0v2" fill="none" stroke="#f4f4f4" stroke-width="1.200"/><rect x="405.600" y="705.800" width="2.500" height="2.500" fill="#f25022"/><rect x="408.700" y="705.800" width="2.500" height="2.500" fill="#7fba00"/><rect x="405.600" y="708.900" width="2.500" height="2.500" fill="#00a4ef"/><rect x="408.700" y="708.900" width="2.500" height="2.500" fill="#ffb900"/>
<!-- mail -->
<path d="M433 704.400l8.600-5.400 8.600 5.400v9.400h-17.200z" fill="#2f9be0"/><path d="M433 704.600l8.600 5.200 8.600-5.200v0.800l-8.600 6-8.600-6z" fill="#d7eefc"/><path d="M433 704.400l8.600-5.400 8.600 5.400-8.600 5.200z" fill="#1a7fd0"/>
<!-- chrome -->
<circle cx="473.900" cy="706.600" r="7.800" fill="#e33b2e"/><path d="M473.900 706.600L467.100 702.800A7.800 7.800 0 0 0 470.200 713.500z" fill="#2da94f"/><path d="M473.900 706.600L470.200 713.500A7.800 7.800 0 0 0 481.500 704.800z" fill="#fcc31e"/><path d="M467.200 702.700a7.800 7.800 0 0 1 14.300 2.100h-7.600z" fill="#e33b2e"/><circle cx="473.900" cy="706.600" r="3.600" fill="#fff"/><circle cx="473.900" cy="706.600" r="2.800" fill="#4a8af4"/>
<!-- obs -->
<circle cx="506.600" cy="706.600" r="7.200" fill="#1d1d1d" stroke="#d8d8d8" stroke-width="1.100"/><path d="M506.600 706.600m-1-5.600a4 4 0 0 1 3.400 6.200M509.400 710.600a4 4 0 0 1-7-1.200M501.600 705.800a4 4 0 0 1 4.600-4.600" fill="none" stroke="#d8d8d8" stroke-width="1.200"/>
<!-- green arrow -->
<path d="M534.600 699.800l11.800 6.800-11.800 6.800v-3l6.600-3.800-6.600-3.800z" fill="#6cc32a"/><path d="M534.600 704.600l3.600 2-3.600 2z" fill="#6cc32a"/>
<!-- monitor -->
<rect x="567.200" y="700.200" width="13.600" height="9.600" rx="0.800" fill="#e6e9ec"/><rect x="568.400" y="701.400" width="11.200" height="7.200" fill="#b9d3e8"/><path d="M569 706.600l2-2.600 2 2 2-3.400 2 2.600 2-1.400" stroke="#fff" stroke-width="0.700" fill="none"/><rect x="564.800" y="703.200" width="4.400" height="8" fill="#d4d7da"/><rect x="571.400" y="710" width="5.400" height="2.800" fill="#c8cbce"/><rect x="569.400" y="712.400" width="9.400" height="1.400" fill="#dadde0"/>
<!-- spyder -->
<circle cx="604.500" cy="706.400" r="6.600" fill="none" stroke="#e8e8e8" stroke-width="0.900"/><path d="M598 706.400h13M604.500 699.800v13.200M600 701.800l9 9.200M609 701.800l-9 9.200" stroke="#e8e8e8" stroke-width="0.700"/><ellipse cx="604.500" cy="706" rx="4.600" ry="2.800" fill="#d01820"/><path d="M602 707.400l1.400-2.600 1.400 2 1.400-2.400" stroke="#1d1d1d" stroke-width="0.800" fill="none"/>
<!-- tray -->
<path d="M1110.200 708.800l3.800-3.800 3.800 3.800" fill="none" stroke="#fff" stroke-width="1"/>
<rect x="1127" y="703.400" width="5.600" height="5.600" rx="1" fill="none" stroke="#fff" stroke-width="0.900"/><path d="M1127.400 702.400a3.400 1.600 0 0 1 5.200 0M1127.400 711a3.400 1.600 0 0 0 5.200 0" fill="none" stroke="#fff" stroke-width="0.800"/><rect x="1128.800" y="705" width="2" height="2.400" fill="#fff"/><rect x="1132.800" y="705" width="1.400" height="2.600" fill="#fff"/>
<path d="M1142.600 710.200a2.500 2.500 0 0 1 0.200-5a3.400 3.400 0 0 1 6.200-0.800a2.900 2.900 0 0 1 0.600 5.800z" fill="#f0f0f0"/>
<rect x="1159.800" y="701.400" width="4.400" height="7.600" rx="2.200" fill="#f0f0f0"/><path d="M1158.400 707.600a3.600 3.600 0 0 0 7.200 0M1162 711.200v1.400" fill="none" stroke="#f0f0f0" stroke-width="0.900"/>
<rect x="1175.200" y="702.600" width="8.400" height="5.800" fill="none" stroke="#fff" stroke-width="1"/><rect x="1172.400" y="702.200" width="2.400" height="2.400" fill="#fff"/><path d="M1173.600 704.600v5.400h3M1179.400 708.400v2M1177.400 710.800h4.200" stroke="#fff" stroke-width="0.900" fill="none"/>
<path d="M1188.400 705.200h2l2.600-2.400v8l-2.600-2.400h-2z" fill="none" stroke="#fff" stroke-width="0.900"/><path d="M1194.600 704.800a2.600 2.600 0 0 1 0 4M1196.400 703.200a4.800 4.800 0 0 1 0 7.200" fill="none" stroke="#fff" stroke-width="0.800"/>
<!-- notification -->
<path d="M1252.600 701.600h10.400v8h-7l-2 2.400v-2.400h-1.400z" fill="#fff"/><path d="M1254.400 703.800h6.800M1254.400 705.600h6.800M1254.400 707.400h4" stroke="#1d1d1d" stroke-width="0.700"/>
<circle cx="1263.200" cy="710.800" r="3.800" fill="#1d1d1d" stroke="#bbb" stroke-width="0.700"/><path d="M1262.400 709.600l1.200-0.800v4.200" stroke="#fff" stroke-width="0.900" fill="none"/>
</g>
</svg>

</div></body></html>
